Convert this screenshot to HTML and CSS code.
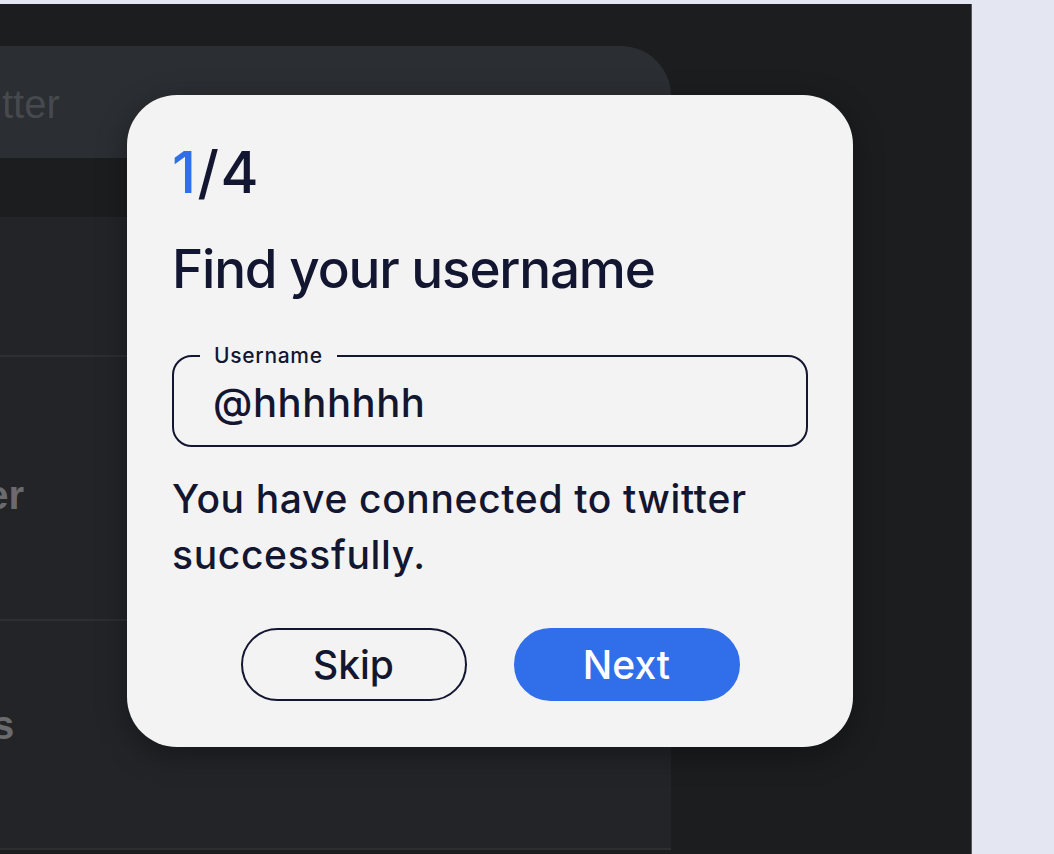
FILE: index.html
```html
<!DOCTYPE html>
<html lang="en">
<head>
    <meta charset="UTF-8">
    <meta name="viewport" content="width=device-width, initial-scale=1.0">
    <title>Find your username</title>
    <link rel="stylesheet" href="styles.css">
</head>
<body>
    <div class="panel">
        <div class="feed">
            <div class="feed-search">Twitter</div>
            <div class="feed-list">
                <div class="feed-row row-first"></div>
                <div class="feed-row row-second"><span class="feed-label">Twitter</span></div>
                <div class="feed-row row-third"><span class="feed-label">Likes</span></div>
            </div>
        </div>

        <div class="dialog">
            <div class="step"><span class="step-current">1</span>/4</div>
            <h2 class="dialog-title">Find your username</h2>

            <div class="field">
                <span class="field-label">Username</span>
                <div class="field-value">@hhhhhhh</div>
            </div>

            <p class="dialog-text">You have connected to twitter successfully.</p>

            <div class="actions">
                <button class="btn btn-outline">Skip</button>
                <button class="btn btn-primary">Next</button>
            </div>
        </div>
    </div>
</body>
</html>
```

FILE: styles.css
```css
body {
    margin: 0;
    background-color: #e4e7f1;
    font-family: "Liberation Sans", Arial, sans-serif;
    overflow: hidden;
}
.panel {
    position: relative;
    width: 971px;
    height: 850px;
    margin-top: 4px;
    background-color: #1c1d1f;
    border-right: 1px solid #55575b;
    overflow: hidden;
}

/* feed behind the dialog */
.feed {
    width: 791px;
    margin-left: -120px;
    padding-top: 42px;
}
.feed-search {
    height: 112px;
    box-sizing: border-box;
    padding: 4px 0 0 62px;
    line-height: 108px;
    font-size: 40px;
    color: #46494d;
    background-color: #2b2e32;
    border-radius: 0 50px 0 0;
}
.feed-list {
    margin-top: 59px;
    background-color: #232428;
}
.feed-row {
    border-bottom: 2px solid #2c2e32;
    box-sizing: border-box;
}
.row-first {
    height: 140px;
}
.row-second {
    height: 264px;
    padding: 114px 0 0 16px;
}
.row-third {
    height: 229px;
    padding: 80px 0 0 32px;
}
.feed-label {
    font-size: 40px;
    font-weight: bold;
    line-height: 48px;
    color: #6a6b6e;
}

/* dialog */
.dialog {
    position: absolute;
    left: 127px;
    top: 91px;
    width: 726px;
    box-sizing: border-box;
    padding: 42px 45px 46px;
    background-color: #f3f3f3;
    border-radius: 50px;
    box-shadow: 0 8px 30px rgba(0,0,0,0.35);
    color: #131630;
    font-family: Inter, "Liberation Sans", sans-serif;
    font-weight: 500;
}
.step {
    font-size: 58px;
    line-height: 70px;
    letter-spacing: 1.5px;
    margin-bottom: 30px;
}
.step-current {
    color: #316fea;
}
.dialog-title {
    margin: 0 0 54px;
    font-size: 53px;
    font-weight: 500;
    line-height: 64px;
    letter-spacing: -1.2px;
}
.field {
    position: relative;
    border: 2px solid #131630;
    border-radius: 20px;
    padding: 21px 0 17px 39px;
}
.field-label {
    position: absolute;
    top: -13px;
    left: 26px;
    padding: 0 14px;
    background-color: #f3f3f3;
    font-size: 21px;
    line-height: 24px;
    letter-spacing: 0.7px;
}
.field-value {
    font-size: 40px;
    line-height: 50px;
    letter-spacing: 0.6px;
}
.dialog-text {
    margin: 24px 0 45px;
    font-size: 39px;
    line-height: 56px;
    letter-spacing: 0.65px;
}
.actions {
    display: flex;
    justify-content: center;
    gap: 47px;
}
.btn {
    width: 226px;
    height: 73px;
    border-radius: 37px;
    font-family: inherit;
    font-weight: 500;
    font-size: 39px;
    cursor: pointer;
}
.btn-outline {
    background: transparent;
    border: 2px solid #131630;
    color: #131630;
}
.btn-primary {
    background-color: #316fea;
    border: 2px solid #316fea;
    color: white;
}
```
